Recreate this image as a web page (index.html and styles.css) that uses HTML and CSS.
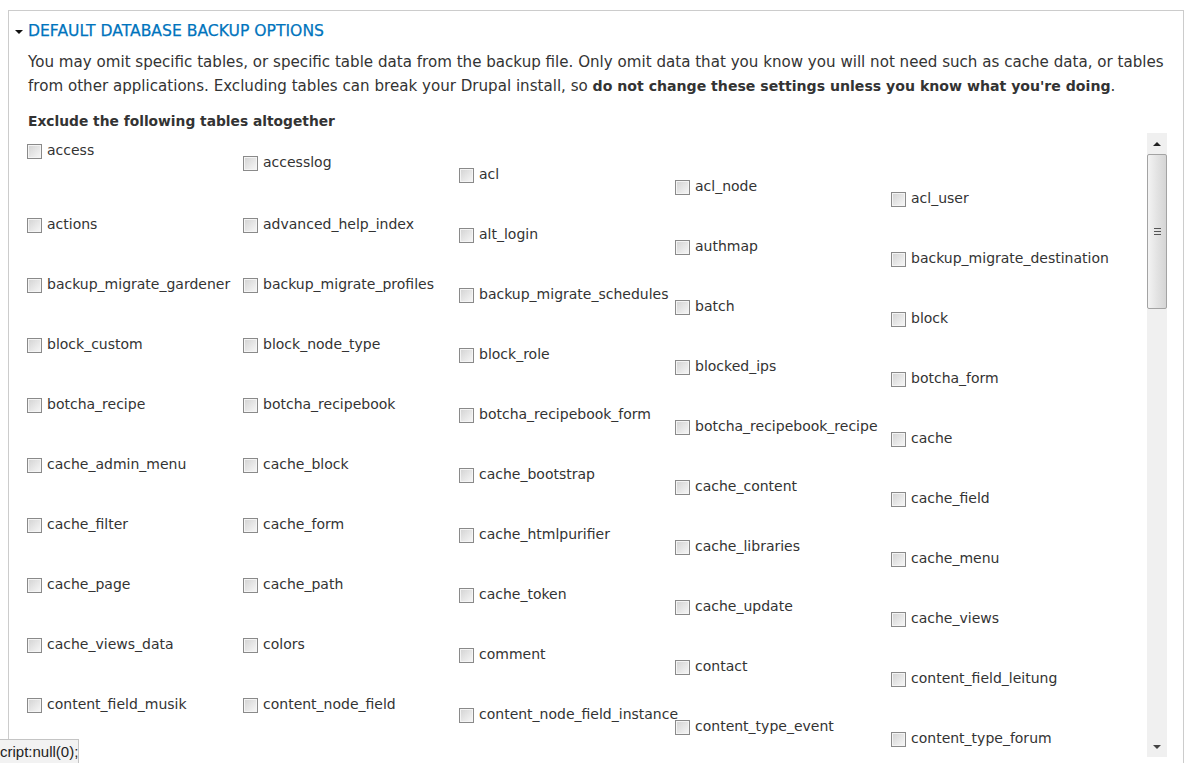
FILE: index.html
```html
<!DOCTYPE html>
<html>
<head>
<meta charset="utf-8">
<title>Backup options</title>
<link rel="stylesheet" href="styles.css">
</head>
<body>
<div class="fieldset">
  <div class="legend"><span class="tri"></span><span class="legend-text">DEFAULT DATABASE BACKUP OPTIONS</span></div>
  <p class="desc">You may omit specific tables, or specific table data from the backup file. Only omit data that you know you will not need such as cache data, or tables from other applications. Excluding tables can break your Drupal install, so <strong>do not change these settings unless you know what you're doing</strong>.</p>
  <div class="label">Exclude the following tables altogether</div>
  <div class="scrollbox">
    <div class="tables">
      <div class="item"><span class="cb"></span><span class="lbl">access</span></div>
      <div class="item"><span class="cb"></span><span class="lbl">accesslog</span></div>
      <div class="item"><span class="cb"></span><span class="lbl">acl</span></div>
      <div class="item"><span class="cb"></span><span class="lbl">acl_node</span></div>
      <div class="item"><span class="cb"></span><span class="lbl">acl_user</span></div>

      <div class="item"><span class="cb"></span><span class="lbl">actions</span></div>
      <div class="item"><span class="cb"></span><span class="lbl">advanced_help_index</span></div>
      <div class="item"><span class="cb"></span><span class="lbl">alt_login</span></div>
      <div class="item"><span class="cb"></span><span class="lbl">authmap</span></div>
      <div class="item"><span class="cb"></span><span class="lbl">backup_migrate_destination</span></div>

      <div class="item"><span class="cb"></span><span class="lbl">backup_migrate_gardener</span></div>
      <div class="item"><span class="cb"></span><span class="lbl">backup_migrate_profiles</span></div>
      <div class="item"><span class="cb"></span><span class="lbl">backup_migrate_schedules</span></div>
      <div class="item"><span class="cb"></span><span class="lbl">batch</span></div>
      <div class="item"><span class="cb"></span><span class="lbl">block</span></div>

      <div class="item"><span class="cb"></span><span class="lbl">block_custom</span></div>
      <div class="item"><span class="cb"></span><span class="lbl">block_node_type</span></div>
      <div class="item"><span class="cb"></span><span class="lbl">block_role</span></div>
      <div class="item"><span class="cb"></span><span class="lbl">blocked_ips</span></div>
      <div class="item"><span class="cb"></span><span class="lbl">botcha_form</span></div>

      <div class="item"><span class="cb"></span><span class="lbl">botcha_recipe</span></div>
      <div class="item"><span class="cb"></span><span class="lbl">botcha_recipebook</span></div>
      <div class="item"><span class="cb"></span><span class="lbl">botcha_recipebook_form</span></div>
      <div class="item"><span class="cb"></span><span class="lbl">botcha_recipebook_recipe</span></div>
      <div class="item"><span class="cb"></span><span class="lbl">cache</span></div>

      <div class="item"><span class="cb"></span><span class="lbl">cache_admin_menu</span></div>
      <div class="item"><span class="cb"></span><span class="lbl">cache_block</span></div>
      <div class="item"><span class="cb"></span><span class="lbl">cache_bootstrap</span></div>
      <div class="item"><span class="cb"></span><span class="lbl">cache_content</span></div>
      <div class="item"><span class="cb"></span><span class="lbl">cache_field</span></div>

      <div class="item"><span class="cb"></span><span class="lbl">cache_filter</span></div>
      <div class="item"><span class="cb"></span><span class="lbl">cache_form</span></div>
      <div class="item"><span class="cb"></span><span class="lbl">cache_htmlpurifier</span></div>
      <div class="item"><span class="cb"></span><span class="lbl">cache_libraries</span></div>
      <div class="item"><span class="cb"></span><span class="lbl">cache_menu</span></div>

      <div class="item"><span class="cb"></span><span class="lbl">cache_page</span></div>
      <div class="item"><span class="cb"></span><span class="lbl">cache_path</span></div>
      <div class="item"><span class="cb"></span><span class="lbl">cache_token</span></div>
      <div class="item"><span class="cb"></span><span class="lbl">cache_update</span></div>
      <div class="item"><span class="cb"></span><span class="lbl">cache_views</span></div>

      <div class="item"><span class="cb"></span><span class="lbl">cache_views_data</span></div>
      <div class="item"><span class="cb"></span><span class="lbl">colors</span></div>
      <div class="item"><span class="cb"></span><span class="lbl">comment</span></div>
      <div class="item"><span class="cb"></span><span class="lbl">contact</span></div>
      <div class="item"><span class="cb"></span><span class="lbl">content_field_leitung</span></div>

      <div class="item"><span class="cb"></span><span class="lbl">content_field_musik</span></div>
      <div class="item"><span class="cb"></span><span class="lbl">content_node_field</span></div>
      <div class="item"><span class="cb"></span><span class="lbl">content_node_field_instance</span></div>
      <div class="item"><span class="cb"></span><span class="lbl">content_type_event</span></div>
      <div class="item"><span class="cb"></span><span class="lbl">content_type_forum</span></div>
    </div>
    <div class="sb">
      <div class="sb-btn"><span class="arrow-up"></span></div>
      <div class="sb-thumb"><span class="grip"></span></div>
      <div class="sb-track"></div>
      <div class="sb-btn"><span class="arrow-down"></span></div>
    </div>
  </div>
</div>
<div class="status">cript:null(0);</div>
</body>
</html>
```

FILE: styles.css
```css
html, body {
  margin: 0;
  padding: 0;
  background: #fff;
  overflow: hidden;
  height: 763px;
}

body {
  font-family: "DejaVu Sans", sans-serif;
  color: #333;
}

.fieldset {
  margin: 10px 11px 0 8px;
  border: 1px solid #cccccc;
  border-bottom: none;
  padding: 10px 16px 0 19px;
  height: 760px;
}

.legend {
  display: flex;
  align-items: center;
  height: 20px;
  margin-left: -13px;
}

.tri {
  width: 0;
  height: 0;
  border-left: 4px solid transparent;
  border-right: 4px solid transparent;
  border-top: 4px solid #111;
  margin-right: 5px;
  margin-top: 1px;
}

.legend-text {
  font-size: 15.6px;
  line-height: 20px;
  color: #0074bd;
  -webkit-text-stroke: 0.25px #0074bd;
}

.desc {
  margin: 9px 0 0 0;
  font-size: 15.1px;
  line-height: 24px;
  color: #333;
}

.desc strong {
  font-weight: bold;
  font-size: 14.1px;
}

.label {
  margin-top: 13px;
  font-size: 13.8px;
  line-height: 20px;
  font-weight: bold;
  color: #333;
}

.scrollbox {
  margin-top: 2px;
  margin-left: -1px;
  height: 624px;
  display: flex;
  overflow: hidden;
}

.tables {
  flex: 1;
  display: grid;
  grid-template-columns: repeat(5, 216px);
  grid-template-rows: 74px;
  grid-auto-rows: 60px;
  padding-top: 11px;
  align-content: start;
  overflow: hidden;
}

.item {
  display: flex;
  align-items: flex-start;
  white-space: nowrap;
}

.item:nth-child(5n+3) { padding-top: 10px; }
.item:nth-child(5n+4) { padding-top: 22px; }
.item:nth-child(5n+5) { padding-top: 34px; }
.item:nth-child(2) { padding-top: 12px; }
.item:nth-child(3) { padding-top: 24px; }
.item:nth-child(4) { padding-top: 36px; }
.item:nth-child(5) { padding-top: 48px; }

.cb {
  flex: none;
  box-sizing: border-box;
  width: 15px;
  height: 15px;
  border: 1px solid #8a8a8a;
  background: linear-gradient(135deg, #d2d2d2 0%, #e9e9e9 60%, #f7f7f7 100%);
  box-shadow: inset 0 0 0 1px #f4f4f4;
}

.lbl {
  margin-left: 5px;
  font-size: 14px;
  line-height: 15px;
  margin-top: -1px;
  color: #333;
}

.sb {
  flex: none;
  width: 20px;
  height: 624px;
  background: #f0f0f0;
  display: flex;
  flex-direction: column;
}

.sb-btn {
  height: 21px;
  display: flex;
  align-items: center;
  justify-content: center;
  flex: none;
}

.arrow-up {
  width: 0;
  height: 0;
  border-left: 4px solid transparent;
  border-right: 4px solid transparent;
  border-bottom: 4px solid #222;
}

.arrow-down {
  width: 0;
  height: 0;
  border-left: 4px solid transparent;
  border-right: 4px solid transparent;
  border-top: 4px solid #444;
}

.sb-thumb {
  flex: none;
  height: 155px;
  box-sizing: border-box;
  border: 1px solid #a3a3a3;
  border-radius: 2px;
  background: linear-gradient(to right, #f3f3f3 0%, #e3e3e3 50%, #d5d5d5 100%);
  display: flex;
  align-items: center;
  justify-content: center;
}

.grip {
  width: 7px;
  height: 5px;
  border-top: 1px solid #555;
  border-bottom: 1px solid #555;
  position: relative;
}

.grip::after {
  content: "";
  position: absolute;
  left: 0;
  right: 0;
  top: 2px;
  border-top: 1px solid #555;
}

.sb-track {
  flex: 1;
}

.status {
  position: fixed;
  left: 0;
  bottom: 0;
  height: 23px;
  width: 78px;
  background: #f2f2f2;
  border-top: 1px solid #c4c4c4;
  border-right: 1px solid #c4c4c4;
  font-family: "Liberation Sans", sans-serif;
  font-size: 15px;
  line-height: 23px;
  color: #222;
  white-space: nowrap;
  overflow: hidden;
  padding-left: 0;
}
```
